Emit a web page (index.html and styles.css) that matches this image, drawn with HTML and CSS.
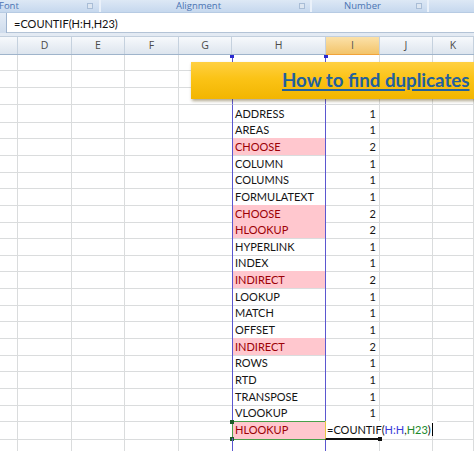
FILE: index.html
```html
<!DOCTYPE html>
<html>
<head>
<meta charset="utf-8">
<link rel="stylesheet" href="styles.css">
</head>
<body>
<div class="app">
  <div class="ribbon">
    <div class="grp g-font"><span class="lbl">Font</span><span class="launch"></span></div>
    <div class="grp g-align"><span class="lbl">Alignment</span><span class="launch"></span></div>
    <div class="grp g-num"><span class="lbl">Number</span><span class="launch"></span></div>
    <div class="grp g-rest"></div>
  </div>
  <div class="fbar">
    <div class="ftab"></div>
    <div class="ftext">=COUNTIF(H:H,H23)</div>
  </div>
  <div class="band"></div>
  <div class="sheet">
    <div class="row hdr"><div class="ch"></div><div class="ch">D</div><div class="ch">E</div><div class="ch">F</div><div class="ch">G</div><div class="ch">H</div><div class="ch sel">I</div><div class="ch">J</div><div class="ch">K</div></div>
    <div class="row"><div class="c"></div><div class="c"></div><div class="c"></div><div class="c"></div><div class="c g"></div><div class="c h top"></div><div class="c"></div><div class="c"></div><div class="c"></div></div>
    <div class="row"><div class="c"></div><div class="c"></div><div class="c"></div><div class="c"></div><div class="c g"></div><div class="c h"></div><div class="c"></div><div class="c"></div><div class="c"></div></div>
    <div class="row"><div class="c"></div><div class="c"></div><div class="c"></div><div class="c"></div><div class="c g"></div><div class="c h"></div><div class="c"></div><div class="c"></div><div class="c"></div></div>
    <div class="row"><div class="c"></div><div class="c"></div><div class="c"></div><div class="c"></div><div class="c g"></div><div class="c h">ADDRESS</div><div class="c n">1</div><div class="c"></div><div class="c"></div></div>
    <div class="row"><div class="c"></div><div class="c"></div><div class="c"></div><div class="c"></div><div class="c g"></div><div class="c h">AREAS</div><div class="c n">1</div><div class="c"></div><div class="c"></div></div>
    <div class="row"><div class="c"></div><div class="c"></div><div class="c"></div><div class="c"></div><div class="c g"></div><div class="c h dup">CHOOSE</div><div class="c n">2</div><div class="c"></div><div class="c"></div></div>
    <div class="row"><div class="c"></div><div class="c"></div><div class="c"></div><div class="c"></div><div class="c g"></div><div class="c h">COLUMN</div><div class="c n">1</div><div class="c"></div><div class="c"></div></div>
    <div class="row"><div class="c"></div><div class="c"></div><div class="c"></div><div class="c"></div><div class="c g"></div><div class="c h">COLUMNS</div><div class="c n">1</div><div class="c"></div><div class="c"></div></div>
    <div class="row"><div class="c"></div><div class="c"></div><div class="c"></div><div class="c"></div><div class="c g"></div><div class="c h">FORMULATEXT</div><div class="c n">1</div><div class="c"></div><div class="c"></div></div>
    <div class="row"><div class="c"></div><div class="c"></div><div class="c"></div><div class="c"></div><div class="c g"></div><div class="c h dup">CHOOSE</div><div class="c n">2</div><div class="c"></div><div class="c"></div></div>
    <div class="row"><div class="c"></div><div class="c"></div><div class="c"></div><div class="c"></div><div class="c g"></div><div class="c h dup">HLOOKUP</div><div class="c n">2</div><div class="c"></div><div class="c"></div></div>
    <div class="row"><div class="c"></div><div class="c"></div><div class="c"></div><div class="c"></div><div class="c g"></div><div class="c h">HYPERLINK</div><div class="c n">1</div><div class="c"></div><div class="c"></div></div>
    <div class="row"><div class="c"></div><div class="c"></div><div class="c"></div><div class="c"></div><div class="c g"></div><div class="c h">INDEX</div><div class="c n">1</div><div class="c"></div><div class="c"></div></div>
    <div class="row"><div class="c"></div><div class="c"></div><div class="c"></div><div class="c"></div><div class="c g"></div><div class="c h dup">INDIRECT</div><div class="c n">2</div><div class="c"></div><div class="c"></div></div>
    <div class="row"><div class="c"></div><div class="c"></div><div class="c"></div><div class="c"></div><div class="c g"></div><div class="c h">LOOKUP</div><div class="c n">1</div><div class="c"></div><div class="c"></div></div>
    <div class="row"><div class="c"></div><div class="c"></div><div class="c"></div><div class="c"></div><div class="c g"></div><div class="c h">MATCH</div><div class="c n">1</div><div class="c"></div><div class="c"></div></div>
    <div class="row"><div class="c"></div><div class="c"></div><div class="c"></div><div class="c"></div><div class="c g"></div><div class="c h">OFFSET</div><div class="c n">1</div><div class="c"></div><div class="c"></div></div>
    <div class="row"><div class="c"></div><div class="c"></div><div class="c"></div><div class="c"></div><div class="c g"></div><div class="c h dup">INDIRECT</div><div class="c n">2</div><div class="c"></div><div class="c"></div></div>
    <div class="row"><div class="c"></div><div class="c"></div><div class="c"></div><div class="c"></div><div class="c g"></div><div class="c h">ROWS</div><div class="c n">1</div><div class="c"></div><div class="c"></div></div>
    <div class="row"><div class="c"></div><div class="c"></div><div class="c"></div><div class="c"></div><div class="c g"></div><div class="c h">RTD</div><div class="c n">1</div><div class="c"></div><div class="c"></div></div>
    <div class="row"><div class="c"></div><div class="c"></div><div class="c"></div><div class="c"></div><div class="c g"></div><div class="c h">TRANSPOSE</div><div class="c n">1</div><div class="c"></div><div class="c"></div></div>
    <div class="row"><div class="c"></div><div class="c"></div><div class="c"></div><div class="c"></div><div class="c g"></div><div class="c h">VLOOKUP</div><div class="c n">1</div><div class="c"></div><div class="c"></div></div>
    <div class="row"><div class="c"></div><div class="c"></div><div class="c"></div><div class="c"></div><div class="c g"></div><div class="c h dup ref">HLOOKUP</div><div class="c edit"><span class="etext">=COUNTIF(<b class="rb">H:H</b>,<b class="rg">H23</b>)<i class="caret"></i></span><span class="fill"></span></div><div class="c"></div><div class="c"></div></div>
    <div class="row"><div class="c"></div><div class="c"></div><div class="c"></div><div class="c"></div><div class="c g"></div><div class="c h"></div><div class="c"></div><div class="c"></div><div class="c"></div></div>
  </div>
  <div class="banner"><span class="btext">How to find duplicates</span></div>
</div>
</body>
</html>
```

FILE: styles.css
```css
html, body {
  margin: 0;
  padding: 0;
  background: #fff;
  overflow: hidden;
}
.app {
  position: relative;
  width: 474px;
  height: 451px;
  overflow: hidden;
  font-family: "Lato", "Liberation Sans", sans-serif;
}
.ribbon {
  height: 13px;
  display: flex;
  background: linear-gradient(#dde8f5, #c6d8ee);
  border-bottom: 1px solid #b7cbe3;
  box-sizing: border-box;
}
.grp {
  position: relative;
  height: 12px;
  border-right: 2px solid #eaf1fa;
  box-sizing: border-box;
  font-family: "Open Sans", sans-serif;
  font-size: 9.5px;
  line-height: 12px;
  color: #4b74b3;
  text-align: center;
}
.g-font { width: 101px; text-align: left; }
.g-font .lbl { margin-left: -1px; }
.g-align { width: 211px; padding-right: 14px; }
.g-num { width: 117px; padding-right: 14px; }
.g-rest { flex: 1; border-right: none; }
.launch {
  position: absolute;
  right: 5px;
  top: 3px;
  width: 4px;
  height: 4px;
  border: 1px solid #a9bdd6;
  background: #dde6f1;
}
.g-font .launch { right: 6px; }
.fbar {
  height: 20px;
  display: flex;
  align-items: center;
  background: #fff;
  border-bottom: 1px solid #b3c3d6;
  box-sizing: border-box;
}
.ftab {
  width: 7px;
  height: 20px;
  background: linear-gradient(#e4ecf6, #cfdcec);
  border-right: 1px solid #9fb4cf;
  box-sizing: border-box;
}
.ftext {
  margin-left: 7px;
  font-size: 11px;
  color: #111;
  padding-top: 1px;
}
.band {
  height: 3px;
  background: #e3eaf3;
}
.row {
  display: grid;
  grid-template-columns: 18px 54px 53px 54px 53px 94px 54px 53px 41px;
  height: 16.667px;
}
.hdr {
  height: 18.6px;
  background: linear-gradient(#f7f9fc, #dde5ee);
  border-top: 1px solid #c2cfdd;
  border-bottom: 1px solid #9fb4cb;
  box-sizing: border-box;
}
.ch {
  border-right: 1px solid #c5d1de;
  font-family: "Open Sans", sans-serif;
  font-size: 10.5px;
  line-height: 17px;
  text-align: center;
  color: #4a4a4a;
}
.ch.sel {
  background: linear-gradient(#fbe1a9, #f3c46a);
  color: #555;
  border-bottom: 1px solid #f1a33a;
  margin-bottom: -1px;
}
.c {
  position: relative;
  border-right: 1px solid #dadcdd;
  border-bottom: 1px solid #dadcdd;
  box-sizing: border-box;
  font-size: 11px;
  line-height: 17px;
  padding: 0 2px;
  white-space: nowrap;
  color: #151515;
}
.c.g { border-right: none; }
.c.h {
  border-left: 1px solid #5b57d0;
  border-right: 1px solid #5b57d0;
  padding-left: 2px;
}
.c.h.top::before,
.c.h.top::after {
  content: "";
  position: absolute;
  top: 0;
  width: 4px;
  height: 3px;
  background: #2a2ad0;
}
.c.h.top::before { left: -3px; }
.c.h.top::after { right: -3px; }
.c.n {
  text-align: right;
  padding-right: 3px;
}
.c.dup {
  background: #ffc7ce;
  color: #9c0006;
  background-clip: padding-box;
}
.c.ref {
  outline: 1px solid #4aa04a;
  outline-offset: -1px;
}
.c.ref::before,
.c.ref::after {
  content: "";
  position: absolute;
  left: -3px;
  width: 4px;
  height: 4px;
  background: #1e5a2a;
}
.c.ref::before { top: -1px; }
.c.ref::after { bottom: -2px; }
.c.edit {
  overflow: visible;
  z-index: 2;
  border-bottom: 2px solid #111;
  border-right: none;
  border-left: 1px solid #e8c640;
  margin-left: -1px;
  padding: 0;
}
.etext {
  position: relative;
  display: inline-block;
  background: #fff;
  padding: 0 4px 0 1px;
  height: 15px;
  font-size: 11px;
  line-height: 17px;
  color: #111;
}
.etext b { font-weight: normal; }
.rb { color: #3b3bd8; }
.rg { color: #1d8a2a; }
.caret {
  display: inline-block;
  width: 1px;
  height: 13px;
  background: #000;
  margin-left: 1px;
  vertical-align: -2px;
}
.fill {
  position: absolute;
  right: -2px;
  bottom: -3px;
  width: 4px;
  height: 4px;
  background: #111;
}
.banner {
  position: absolute;
  left: 191px;
  top: 62px;
  width: 300px;
  height: 37px;
  background: linear-gradient(#ffd042, #fbc316 45%, #f2b500);
  box-shadow: 1px 2px 3px rgba(80, 60, 0, 0.45);
  box-sizing: border-box;
  padding-left: 91px;
  font-family: "Lato", "Liberation Sans", sans-serif;
  font-weight: bold;
  font-size: 18.7px;
  line-height: 37px;
  color: #22609e;
}
.btext {
  text-decoration: underline;
  text-decoration-thickness: 2px;
  text-underline-offset: 2px;
}
```
